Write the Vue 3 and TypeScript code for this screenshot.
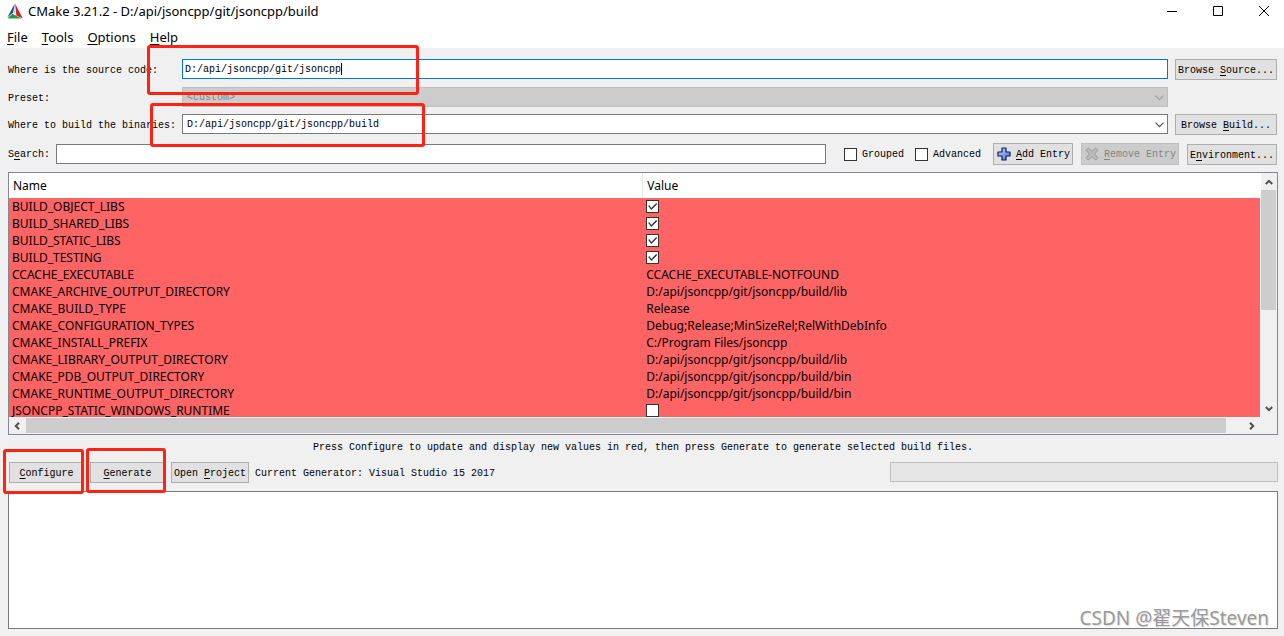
<script setup lang="ts">
import { ref } from 'vue'

interface CacheEntry {
  name: string
  value: string | boolean
}

const sourceDir = ref('D:/api/jsoncpp/git/jsoncpp')
const buildDir = ref('D:/api/jsoncpp/git/jsoncpp/build')
const preset = ref('<custom>')
const search = ref('')
const grouped = ref(false)
const advanced = ref(false)
const output = ref('')

const menus = [
  { key: 'F', rest: 'ile' },
  { key: 'T', rest: 'ools' },
  { key: 'O', rest: 'ptions' },
  { key: 'H', rest: 'elp' },
]

const entries = ref<CacheEntry[]>([
  { name: 'BUILD_OBJECT_LIBS', value: true },
  { name: 'BUILD_SHARED_LIBS', value: true },
  { name: 'BUILD_STATIC_LIBS', value: true },
  { name: 'BUILD_TESTING', value: true },
  { name: 'CCACHE_EXECUTABLE', value: 'CCACHE_EXECUTABLE-NOTFOUND' },
  { name: 'CMAKE_ARCHIVE_OUTPUT_DIRECTORY', value: 'D:/api/jsoncpp/git/jsoncpp/build/lib' },
  { name: 'CMAKE_BUILD_TYPE', value: 'Release' },
  { name: 'CMAKE_CONFIGURATION_TYPES', value: 'Debug;Release;MinSizeRel;RelWithDebInfo' },
  { name: 'CMAKE_INSTALL_PREFIX', value: 'C:/Program Files/jsoncpp' },
  { name: 'CMAKE_LIBRARY_OUTPUT_DIRECTORY', value: 'D:/api/jsoncpp/git/jsoncpp/build/lib' },
  { name: 'CMAKE_PDB_OUTPUT_DIRECTORY', value: 'D:/api/jsoncpp/git/jsoncpp/build/bin' },
  { name: 'CMAKE_RUNTIME_OUTPUT_DIRECTORY', value: 'D:/api/jsoncpp/git/jsoncpp/build/bin' },
  { name: 'JSONCPP_STATIC_WINDOWS_RUNTIME', value: false },
])
</script>

<template>
  <div class="window">
    <header class="titlebar">
      <svg class="logo" viewBox="0 0 16 16" aria-hidden="true">
        <path d="M7.8 0.4 L0.3 14.4 L6.2 9.6 Z" fill="#1d4f94" />
        <path d="M8 0.4 L15.8 15.4 L9.4 12.4 Z" fill="#d0232b" />
        <path d="M0.4 15.4 L5.4 10.8 L14.6 15.4 Z" fill="#2a9a48" />
        <path d="M7.8 3.5 L6.6 9.6 L9 12 Z" fill="#cfd3d8" />
      </svg>
      <h1 class="title">CMake 3.21.2 - D:/api/jsoncpp/git/jsoncpp/build</h1>
      <div class="controls">
        <button type="button" aria-label="Minimize">
          <svg viewBox="0 0 10 10"><path d="M0 5.5H10" /></svg>
        </button>
        <button type="button" aria-label="Maximize">
          <svg viewBox="0 0 10 10"><path d="M0.5 0.5H9.5V9.5H0.5Z" /></svg>
        </button>
        <button type="button" aria-label="Close">
          <svg viewBox="0 0 10 10"><path d="M0 0L10 10M10 0L0 10" /></svg>
        </button>
      </div>
    </header>

    <nav class="menubar">
      <button v-for="m in menus" :key="m.key" type="button"><u>{{ m.key }}</u>{{ m.rest }}</button>
    </nav>

    <main class="content">
      <section class="paths">
        <label for="source">Where is the source code:</label>
        <div class="field">
          <input id="source" v-model="sourceDir" class="box focused" type="text" />
          <span class="caret"></span>
        </div>
        <button type="button" class="btn">Browse <u>S</u>ource...</button>

        <label for="preset">Preset:</label>
        <div class="field">
          <select id="preset" v-model="preset" class="box" disabled>
            <option>&lt;custom&gt;</option>
          </select>
          <svg class="chevron dim" viewBox="0 0 9 6"><path d="M0.5 0.7L4.5 4.7L8.5 0.7" /></svg>
        </div>
        <span></span>

        <label for="build">Where to build the binaries:</label>
        <div class="field">
          <select id="build" v-model="buildDir" class="box">
            <option>D:/api/jsoncpp/git/jsoncpp/build</option>
          </select>
          <svg class="chevron" viewBox="0 0 9 6"><path d="M0.5 0.7L4.5 4.7L8.5 0.7" /></svg>
        </div>
        <button type="button" class="btn">Browse <u>B</u>uild...</button>
      </section>

      <section class="search">
        <label class="search-label" for="search">S<u>e</u>arch:</label>
        <input id="search" v-model="search" class="box search-box" type="text" />
        <label class="check"><input v-model="grouped" type="checkbox" /><span>Grouped</span></label>
        <label class="check"><input v-model="advanced" type="checkbox" /><span>Advanced</span></label>
        <button type="button" class="btn icon-btn add">
          <svg viewBox="0 0 14 14">
            <defs>
              <linearGradient id="plus" x1="0" y1="0" x2="1" y2="1">
                <stop offset="0" stop-color="#c4dcff" />
                <stop offset="1" stop-color="#3f6fd0" />
              </linearGradient>
            </defs>
            <path d="M5 1H9V5H13V9H9V13H5V9H1V5H5Z" fill="url(#plus)" stroke="#10195c" stroke-width="1.2" stroke-linejoin="round" />
          </svg>
          <span><u>A</u>dd Entry</span>
        </button>
        <button type="button" class="btn icon-btn remove" disabled>
          <svg viewBox="0 0 14 14">
            <path d="M1 3.2L3.2 1L7 4.3L10.8 1L13 3.2L9.7 7L13 10.8L10.8 13L7 9.7L3.2 13L1 10.8L4.3 7Z" fill="#bababa" stroke="#9b9b9b" stroke-linejoin="round" />
          </svg>
          <span><u>R</u>emove Entry</span>
        </button>
        <button type="button" class="btn env">E<u>n</u>vironment...</button>
      </section>

      <section class="cache">
        <div class="viewport">
          <table>
            <colgroup><col class="name-col" /><col /></colgroup>
            <thead>
              <tr><th>Name</th><th>Value</th></tr>
            </thead>
            <tbody>
              <tr v-for="e in entries" :key="e.name">
                <td>{{ e.name }}</td>
                <td>
                  <input v-if="typeof e.value === 'boolean'" v-model="e.value" type="checkbox" :aria-label="e.name" />
                  <template v-else>{{ e.value }}</template>
                </td>
              </tr>
            </tbody>
          </table>
        </div>
        <div class="vbar">
          <svg class="arrow" viewBox="0 0 8 6"><path d="M0.8 5L4 1.8L7.2 5" /></svg>
          <div class="vtrack"><div class="vthumb"></div></div>
          <svg class="arrow" viewBox="0 0 8 6"><path d="M0.8 1L4 4.2L7.2 1" /></svg>
        </div>
        <div class="hbar">
          <svg class="arrow side" viewBox="0 0 6 8"><path d="M5 0.8L1.8 4L5 7.2" /></svg>
          <div class="htrack"><div class="hthumb"></div></div>
          <svg class="arrow side" viewBox="0 0 6 8"><path d="M1 0.8L4.2 4L1 7.2" /></svg>
        </div>
      </section>

      <p class="hint">Press Configure to update and display new values in red, then press Generate to generate selected build files.</p>

      <section class="actions">
        <button type="button" class="btn"><u>C</u>onfigure</button>
        <button type="button" class="btn"><u>G</u>enerate</button>
        <button type="button" class="btn">Open <u>P</u>roject</button>
        <span class="generator">Current Generator: Visual Studio 15 2017</span>
        <div class="progress" role="progressbar" aria-label="Progress"></div>
      </section>

      <textarea v-model="output" class="output" aria-label="Output" readonly></textarea>
    </main>

    <div class="mark mark-source"></div>
    <div class="mark mark-build"></div>
    <div class="mark mark-configure"></div>
    <div class="mark mark-generate"></div>
    <div class="watermark">CSDN @翟天保Steven</div>
  </div>
</template>

<style>
html,
body {
  margin: 0;
}
</style>

<style scoped>
* {
  box-sizing: border-box;
}

.window {
  position: relative;
  display: flex;
  flex-direction: column;
  height: 100vh;
  overflow: hidden;
  background: #f0f0f0;
  color: #000;
  font: 10px/12px 'Liberation Mono', monospace;
}

button,
input,
select,
textarea {
  margin: 0;
  border-radius: 0;
  color: inherit;
  font: inherit;
  outline: none;
}

u {
  text-underline-offset: 2px;
  text-decoration-thickness: 1px;
}

.titlebar {
  display: flex;
  align-items: center;
  height: 21px;
  padding-left: 7px;
  background: #fff;
}

.logo {
  width: 16px;
  height: 16px;
  margin-right: 5px;
}

.title {
  flex: 1;
  margin: 0;
  font: 13px/20px 'Noto Sans', sans-serif;
}

.controls {
  display: flex;
  margin-right: -3px;
}

.controls button {
  display: flex;
  align-items: center;
  justify-content: center;
  width: 46px;
  height: 20px;
  padding: 0;
  border: 0;
  background: none;
}

.controls svg {
  width: 10px;
  height: 10px;
  fill: none;
  stroke: #000;
}

.menubar {
  display: flex;
  gap: 14px;
  height: 27px;
  padding: 6px 7px 0;
  background: #fff;
}

.menubar button {
  height: 20px;
  padding: 0;
  border: 0;
  background: none;
  font: 13px/20px 'Noto Sans', sans-serif;
}

.content {
  display: flex;
  flex: 1;
  flex-direction: column;
  min-height: 0;
  padding: 11px 6px 7px 8px;
}

.paths {
  display: grid;
  grid-template-columns: 174px 1fr 103px;
  grid-template-rows: 21px 20px 21px;
  row-gap: 7px;
  align-items: start;
}

.paths label {
  line-height: 23px;
  white-space: nowrap;
}

.paths .btn {
  width: 102px;
}

.field {
  position: relative;
  margin-right: 7px;
}

.box {
  display: block;
  width: 100%;
  height: 20px;
  padding: 1px 2px 0;
  border: 1px solid #7a7a7a;
  background: #fff;
}

.box.focused {
  border-color: #0078d7;
}

select.box {
  padding: 2px 20px 0 4px;
  appearance: none;
}

select.box:disabled {
  border-color: #bfbfbf;
  background: #ccc;
  color: #838383;
  opacity: 1;
}

.caret {
  position: absolute;
  top: 4px;
  left: 159px;
  width: 1px;
  height: 12px;
  background: #000;
}

.chevron {
  position: absolute;
  top: 8px;
  right: 4px;
  width: 9px;
  height: 6px;
  fill: none;
  stroke: #505050;
  stroke-width: 1.2;
  pointer-events: none;
}

.chevron.dim {
  stroke: #a0a0a0;
}

.btn {
  height: 21px;
  padding: 3px 0 0;
  border: 1px solid #adadad;
  background: #e1e1e1;
  text-align: center;
  white-space: nowrap;
}

.btn:disabled {
  border-color: #bfbfbf;
  background: #ccc;
  color: #838383;
}

.search {
  display: flex;
  align-items: center;
  height: 22px;
  margin-top: 8px;
  padding-right: 1px;
}

.search-label {
  width: 48px;
  padding-top: 2px;
}

.search-box {
  flex: 1;
  width: auto;
  min-width: 0;
  margin-right: 18px;
}

.check {
  display: flex;
  gap: 5px;
  align-items: center;
  margin-right: 11px;
}

.check span {
  padding-top: 2px;
}

input[type='checkbox'] {
  display: block;
  flex: none;
  width: 13px;
  height: 13px;
  border: 1px solid #333;
  background: #fff;
  appearance: none;
}

input[type='checkbox']:checked::before {
  display: block;
  width: 11px;
  height: 11px;
  background: #333;
  clip-path: polygon(1px 5px, 2px 4px, 4px 7px, 9px 2px, 10px 3px, 4px 9px);
  content: '';
}

.icon-btn {
  display: flex;
  gap: 5px;
  align-items: center;
  height: 22px;
  padding: 0 0 0 3px;
}

.icon-btn svg {
  width: 14px;
  height: 14px;
}

.icon-btn span {
  padding-top: 2px;
}

.add {
  width: 80px;
  margin: 0 8px 0 1px;
}

.remove {
  width: 98px;
  margin-right: 8px;
}

.env {
  width: 90px;
}

.cache {
  display: grid;
  flex: 1 1 263px;
  grid-template-columns: 1fr 16px;
  grid-template-rows: 1fr 16px;
  min-height: 0;
  margin-top: 7px;
  border: 1px solid #828790;
  background: #f0f0f0;
}

.viewport {
  min-height: 0;
  overflow: hidden;
  border-right: 1px solid #fff;
  border-bottom: 1px solid #fff;
}

table {
  width: 100%;
  border-collapse: separate;
  border-spacing: 0;
  table-layout: fixed;
  font: 12px/17px 'Noto Sans', sans-serif;
}

.name-col {
  width: 50.7%;
}

th {
  height: 25px;
  padding: 0 4px;
  background: #fff;
  font-weight: 400;
  text-align: left;
}

th:first-child {
  border-right: 1px solid #e5e5e5;
}

td {
  height: 17px;
  padding: 0 3px;
  background: #ff6464;
  white-space: nowrap;
}

.vbar {
  display: flex;
  flex-direction: column;
  align-items: center;
  min-height: 0;
  padding: 6px 1px 6px 0;
}

.vtrack {
  flex: 1;
  width: 15px;
  margin: 5px 0;
}

.vthumb {
  height: 57%;
  background: #cdcdcd;
}

.arrow {
  width: 8px;
  height: 6px;
  fill: none;
  stroke: #505050;
  stroke-width: 2;
}

.arrow.side {
  width: 6px;
  height: 8px;
}

.hbar {
  display: flex;
  align-items: center;
  padding: 0 6px 1px 5px;
}

.htrack {
  flex: 1;
  height: 15px;
  margin: 0 6px;
}

.hthumb {
  width: 98.6%;
  height: 100%;
  background: #cdcdcd;
}

.hint {
  margin: 7px 0 8px;
  text-align: center;
}

.actions {
  display: flex;
  gap: 6px;
  align-items: flex-start;
  padding-left: 1px;
}

.actions .btn {
  flex: none;
  width: 75px;
}

.actions .btn:nth-child(3) {
  width: 78px;
}

.generator {
  flex: 1;
  line-height: 23px;
  white-space: nowrap;
}

.progress {
  flex: none;
  width: 388px;
  height: 20px;
  border: 1px solid #bcbcbc;
  background: #e6e6e6;
}

.output {
  display: block;
  flex: 1 1 138px;
  width: 100%;
  min-height: 0;
  margin-top: 6px;
  padding: 4px;
  border: 1px solid #7a7a7a;
  background: #fff;
  resize: none;
}

.mark {
  position: absolute;
  border: 3px solid #ff2215;
  border-radius: 3px;
  pointer-events: none;
}

.mark-source {
  top: 45px;
  left: 147px;
  width: 272px;
  height: 50px;
}

.mark-build {
  top: 103px;
  left: 150px;
  width: 275px;
  height: 44px;
}

.mark-configure {
  top: 449px;
  left: 3px;
  width: 81px;
  height: 45px;
}

.mark-generate {
  top: 448px;
  left: 86px;
  width: 80px;
  height: 45px;
}

.watermark {
  position: absolute;
  right: 15px;
  bottom: 4px;
  color: #999;
  font: 19px/28px 'Noto Sans', 'Noto Sans CJK SC', sans-serif;
  text-shadow: 1px 1px 1px #ddd;
  pointer-events: none;
}
</style>
